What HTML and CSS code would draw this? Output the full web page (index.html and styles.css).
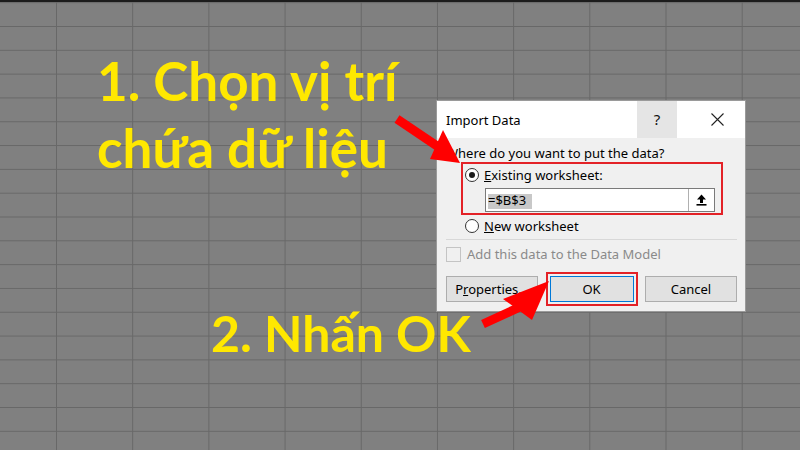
FILE: index.html
```html
<!DOCTYPE html>
<html lang="vi">
<head>
    <meta charset="UTF-8">
    <title>Import Data</title>
    <link rel="stylesheet" href="styles.css">
</head>
<body>
    <!-- bảng tính phía sau -->
    <div class="sheet">

        <p class="note note-1">1. Chọn vị trí<br>chứa dữ liệu</p>
        <p class="note note-2">2. Nhấn OK</p>

        <!-- hộp thoại Import Data -->
        <div class="dialog">
            <div class="titlebar">
                <span class="title">Import Data</span>
                <span class="help">?</span>
                <span class="close">
                    <svg width="13" height="13" viewBox="0 0 13 13">
                        <path d="M0.5 0.5 L12.5 12.5 M12.5 0.5 L0.5 12.5" stroke="#222" stroke-width="1.1"/>
                    </svg>
                </span>
            </div>
            <div class="content">
                <p class="question">Where do you want to put the data?</p>
                <div class="mark">
                    <div class="radio checked"><span class="dot"></span><span><u>E</u>xisting worksheet:</span></div>
                    <div class="range">
                        <span class="value">=$B$3</span>
                        <span class="pick">
                            <svg width="11" height="12" viewBox="0 0 11 12">
                                <path d="M5.5 0.5 L10 5.5 H7 V9 H4 V5.5 H1 Z" fill="#000"/>
                                <rect x="0.5" y="10" width="10" height="1.6" fill="#000"/>
                            </svg>
                        </span>
                    </div>
                </div>
                <div class="radio"><span class="dot"></span><span><u>N</u>ew worksheet</span></div>
                <div class="separator"></div>
                <div class="check"><span class="box"></span><span>Add this data to the Data Model</span></div>
                <div class="buttons">
                    <span class="btn">P<u>r</u>operties...</span>
                    <span class="btn ok">OK</span>
                    <span class="btn">Cancel</span>
                </div>
            </div>
        </div>

        <!-- mũi tên đỏ -->
        <svg class="arrows" width="800" height="450" viewBox="0 0 800 450">
            <line x1="397" y1="117" x2="440" y2="146" stroke="#ff0000" stroke-width="9"/>
            <polygon points="443,128 430,157 460,161" fill="#ff0000"/>
            <line x1="483" y1="322" x2="520" y2="305" stroke="#ff0000" stroke-width="9"/>
            <polygon points="503,297 532,318 549,279" fill="#ff0000"/>
        </svg>
    </div>
</body>
</html>
```

FILE: styles.css
```css
body {
    margin: 0;
    background-color: #808080;
}

/* lưới ô của Excel */
.sheet {
    position: relative;
    width: 800px;
    height: 450px;
    overflow: hidden;
    box-sizing: border-box;
    border-top: 2px solid #1c1c1c;
    background-color: #808080;
    background-image:
        linear-gradient(to right, #686868 1px, transparent 1px),
        linear-gradient(to bottom, #686868 1px, transparent 1px);
    background-size: 76.2px 100%, 100% 23.82px;
    background-position: 56px 0, 0 24px;
}

/* chữ vàng hướng dẫn */
.note {
    position: absolute;
    margin: 0;
    color: #ffe800;
    font-family: 'Lato', 'Open Sans', sans-serif;
    font-weight: bold;
    font-size: 53px;
    line-height: 67px;
}

.note-1 {
    left: 97px;
    top: 45px;
}

.note-2 {
    left: 211px;
    top: 304px;
    font-size: 50px;
    line-height: 54px;
}

.dialog {
    position: absolute;
    left: 436px;
    top: 98px;
    width: 310px;
    height: 212px;
    box-sizing: border-box;
    background-color: #f0f0f0;
    border: 1px solid #9a9a9a;
    font-family: 'Noto Sans', sans-serif;
    font-size: 13px;
    color: #000;
}

.titlebar {
    display: flex;
    align-items: center;
    height: 37px;
    background-color: #fff;
}

.title {
    flex: 1;
    padding-left: 9px;
}

.help {
    width: 40px;
    height: 37px;
    line-height: 37px;
    text-align: center;
    background-color: #e5e5e5;
    font-size: 15px;
    color: #111;
}

.close {
    display: flex;
    justify-content: center;
    width: 40px;
    margin: 0 8px 0 20px;
}

.content {
    padding: 6px 8px 0 9px;
}

.question {
    margin: 0;
    line-height: 18px;
}

.mark {
    margin-left: 15px;
    width: 262px;
    height: 53px;
    box-sizing: border-box;
    border: 2px solid #e32227;
    padding: 0 6px 0 2px;
}

.radio {
    display: flex;
    align-items: center;
    gap: 5px;
    height: 21px;
}

.mark .radio {
    margin-bottom: 3px;
}

.radio .dot {
    width: 12px;
    height: 12px;
    border: 1.5px solid #333;
    border-radius: 50%;
    box-sizing: content-box;
    background-color: #fff;
    position: relative;
}

.radio.checked .dot::after {
    content: '';
    position: absolute;
    left: 3px;
    top: 3px;
    width: 6px;
    height: 6px;
    border-radius: 50%;
    background-color: #1a1a1a;
}

.content > .radio {
    margin-left: 19px;
}

.range {
    display: flex;
    align-items: center;
    margin-left: 20px;
    height: 24px;
    box-sizing: border-box;
    border: 1px solid #7a7a7a;
    background-color: #fff;
}

.value {
    flex: 1;
    padding-left: 2px;
    background: linear-gradient(#fff 3px, #c8c8c8 3px, #c8c8c8 19px, #fff 19px) no-repeat 2px 0 / 44px 100%;
}

.pick {
    width: 25px;
    height: 22px;
    display: flex;
    align-items: center;
    justify-content: center;
    border-left: 1px solid #b0b0b0;
    background-color: #fff;
}

.separator {
    height: 1px;
    margin: 3px 0 5px 0;
    background-color: #d8d8d8;
}

.check {
    display: flex;
    align-items: center;
    gap: 6px;
    height: 18px;
    color: #8a8a8a;
}

.check .box {
    width: 13px;
    height: 13px;
    border: 1px solid #c4c4c4;
    background-color: #f0f0f0;
}

.buttons {
    display: flex;
    justify-content: space-between;
    margin-top: 13px;
}

.btn {
    width: 92px;
    height: 26px;
    line-height: 24px;
    box-sizing: border-box;
    text-align: center;
    background-color: #e1e1e1;
    border: 1px solid #adadad;
}

.btn.ok {
    width: 84px;
    border-color: #0078d7;
    outline: 2px solid #e32227;
    outline-offset: 2px;
}

.arrows {
    position: absolute;
    left: 0;
    top: 0;
}
```
